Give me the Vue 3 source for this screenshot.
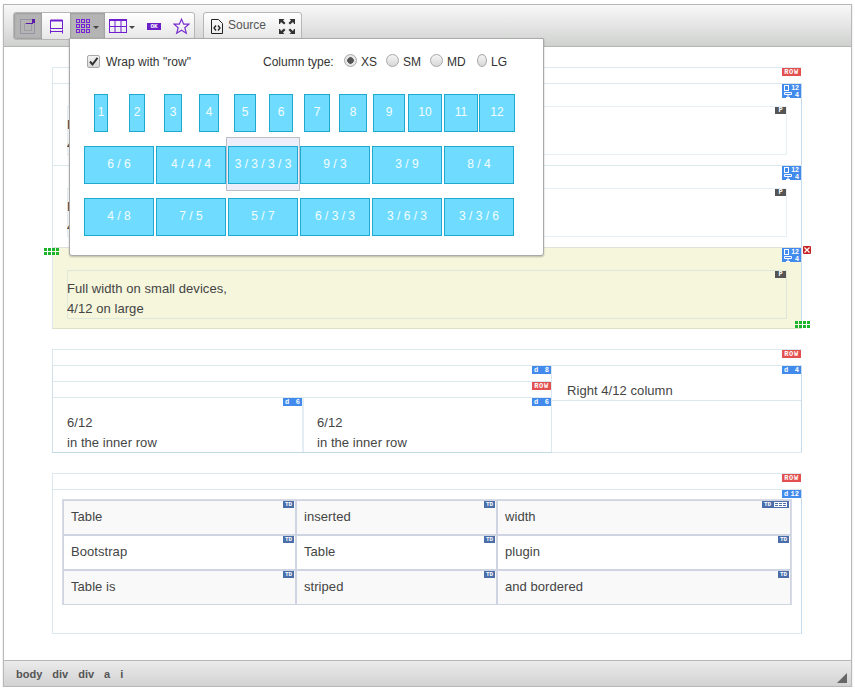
<script setup>
const singles = [
  { n: 1, w: 14, c: 35 }, { n: 2, w: 16, c: 35 }, { n: 3, w: 18, c: 35 }, { n: 4, w: 20, c: 35 },
  { n: 5, w: 22, c: 35 }, { n: 6, w: 24, c: 35 }, { n: 7, w: 26, c: 35 }, { n: 8, w: 28, c: 34 },
  { n: 9, w: 32, c: 35 }, { n: 10, w: 34, c: 36 }, { n: 11, w: 34, c: 35 }, { n: 12, w: 36, c: 36 }
]
const row2 = ['6 / 6', '4 / 4 / 4', '3 / 3 / 3 / 3', '9 / 3', '3 / 9', '8 / 4']
const row3 = ['4 / 8', '7 / 5', '5 / 7', '6 / 3 / 3', '3 / 6 / 3', '3 / 3 / 6']
const radios = [
  { label: 'XS', on: true, w: 42 }, { label: 'SM', on: false, w: 44 },
  { label: 'MD', on: false, w: 45 }, { label: 'LG', on: false, w: 30 }
]
const fullCols = [1, 2, 3]
const table = [
  ['Table', 'inserted', 'width'],
  ['Bootstrap', 'Table', 'plugin'],
  ['Table is', 'striped', 'and bordered']
]
const path = ['body', 'div', 'div', 'a', 'i']
</script>

<template>
  <div class="editor">
    <div class="toolbar">
      <div class="group">
        <button class="tb on w28">
          <svg width="18" height="18" viewBox="0 0 18 18"><rect x="1.500" y="2.500" width="14" height="14" fill="none" stroke="#7d7296" stroke-dasharray="1 1"/><rect x="5.500" y="6.500" width="7" height="7" fill="none" stroke="#8a8298" stroke-dasharray="1 1"/><path d="M7 6h6V2h3v4h-2v1H7z" fill="#5c1aa8"/></svg>
        </button>
        <button class="tb w28">
          <svg width="15" height="15" viewBox="0 0 15 15" fill="none" stroke="#6f1fd0"><rect x="1.500" y="1.500" width="12" height="8"/><path d="M1.500 1.500h12" stroke-width="2"/><path d="M1 12.500h13M1.500 10.500v4M13.500 10.500v4"/></svg>
        </button>
        <button class="tb on w35">
          <svg width="15" height="15" viewBox="0 0 15 15" fill="none" stroke="#7a22d8"><rect x="0.500" y="0.500" width="3" height="3"/><rect x="5.500" y="0.500" width="3" height="3"/><rect x="10.500" y="0.500" width="3" height="3"/><rect x="0.500" y="5.500" width="3" height="3"/><rect x="5.500" y="5.500" width="3" height="3"/><rect x="10.500" y="5.500" width="3" height="3"/><rect x="0.500" y="10.500" width="3" height="3"/><rect x="5.500" y="10.500" width="3" height="3"/><rect x="10.500" y="10.500" width="3" height="3"/></svg>
          <span class="caret"></span>
        </button>
        <button class="tb w34">
          <svg width="18" height="14" viewBox="0 0 18 14" fill="none" stroke="#6f1fd0"><rect x="0.500" y="0.500" width="17" height="13"/><path d="M0 1.500h18"/><path d="M0 7.500h18M6 0v14M12 0v14"/></svg>
          <span class="caret"></span>
        </button>
        <button class="tb w30">
          <span class="okicon">OK</span>
        </button>
        <button class="tb w25">
          <svg width="17" height="17" viewBox="0 0 17 17"><path d="M8.500 1.200l2.200 5h5.200l-4.100 3.500 1.500 5.600-4.800-3-4.800 3 1.500-5.600L1.100 6.200h5.200z" fill="none" stroke="#7a2fd0" stroke-width="1.200"/></svg>
        </button>
      </div>
      <div class="group source">
        <svg class="doc" width="12" height="15" viewBox="0 0 12 15" fill="none" stroke="#222"><path d="M.5.500h7l4 4v10H.500z"/><path d="M5 6.500L3 9l2 2.500M7 6.500L9 9l-2 2.500" stroke-width="1.300"/></svg>
        <span class="srclabel">Source</span>
        <svg class="fs" width="16" height="15" viewBox="0 0 16 15" fill="#333"><path d="M0 0h5.500L4 1.500 6.500 4 5 5.500 2 3 1 5H0zM16 0h-5.500L12 1.500 9.500 4 11 5.500 14 3l1 2h1zM0 15h5.500L4 13.500 6.500 11 5 9.500 2 12l-1-2H0zM16 15h-5.500l1.500-1.500L9.500 11l1.500-1.500 3 2.500 1-2h1z"/></svg>
      </div>
    </div>

    <div class="content">
      <section class="row first">
        <span class="badge rowb">ROW</span>
        <div v-for="i in fullCols" :key="i" class="col full" :class="{ hover: i === 3 }">
          <span class="badge colb">
            <span class="bl"><svg width="5" height="6" viewBox="0 0 5 6" fill="none" stroke="#fff"><rect x=".5" y=".5" width="4" height="5"/></svg><b>12</b></span>
            <span class="bl"><svg width="8" height="6" viewBox="0 0 8 6" fill="none" stroke="#fff"><path d="M.5.500h7v2h-7zM4 3v2M2 5.500h4"/></svg><b>4</b></span>
          </span>
          <div class="para">
            <span class="badge pb">P</span>
            Full width on small devices,<br>4/12 on large
          </div>
          <template v-if="i === 3">
            <svg class="grip gl" width="15" height="7" viewBox="0 0 15 7" fill="#1db32c"><path d="M0 0h3v3H0zM4 0h3v3H4zM8 0h3v3H8zM12 0h3v3h-3zM0 4h3v3H0zM4 4h3v3H4zM8 4h3v3H8zM12 4h3v3h-3z"/></svg>
            <svg class="grip gr" width="15" height="7" viewBox="0 0 15 7" fill="#1db32c"><path d="M0 0h3v3H0zM4 0h3v3H4zM8 0h3v3H8zM12 0h3v3h-3zM0 4h3v3H0zM4 4h3v3H4zM8 4h3v3H8zM12 4h3v3h-3z"/></svg>
            <svg class="close" width="8" height="8" viewBox="0 0 8 8"><rect width="8" height="8" rx="1" fill="#c62020"/><path d="M1.500 1.500l5 5M6.500 1.500l-5 5" stroke="#fff" stroke-width="1.200"/></svg>
          </template>
        </div>
      </section>

      <section class="row second">
        <span class="badge rowb">ROW</span>
        <div class="split">
          <div class="col eight">
            <span class="badge db">d<i>8</i></span>
            <div class="inner-row">
              <span class="badge rowb inner">ROW</span>
              <div class="inner-cols">
                <div class="col six">
                  <span class="badge db">d<i>6</i></span>
                  <p>6/12<br>in the inner row</p>
                </div>
                <div class="col six">
                  <span class="badge db">d<i>6</i></span>
                  <p>6/12<br>in the inner row</p>
                </div>
              </div>
            </div>
          </div>
          <div class="col four">
            <span class="badge db">d<i>4</i></span>
            <div class="rightp">Right 4/12 column</div>
          </div>
        </div>
      </section>

      <section class="row third">
        <span class="badge rowb">ROW</span>
        <div class="col twelve">
          <span class="badge db">d<i>12</i></span>
          <table class="tbl">
            <tbody>
              <tr v-for="(r, ri) in table" :key="ri" :class="{ striped: ri !== 1 }">
                <td v-for="(c, ci) in r" :key="ci" :class="'c' + ci">
                  <span class="badge tdb" :class="{ wide: ri === 0 && ci === 2 }">TD<svg v-if="ri === 0 && ci === 2" width="13" height="5" viewBox="0 0 13 5" fill="none" stroke="#fff"><rect x=".5" y=".5" width="12" height="4"/><path d="M4.500 0v5M8.500 0v5M0 2.500h13"/></svg></span>
                  {{ c }}
                </td>
              </tr>
            </tbody>
          </table>
        </div>
      </section>
    </div>

    <div class="statusbar">
      <span v-for="(p, i) in path" :key="i" class="crumb">{{ p }}</span>
      <svg class="resize" width="10" height="10" viewBox="0 0 10 10"><path d="M10 0v10H0z" fill="#666"/></svg>
    </div>

    <div class="popup">
      <div class="opts">
        <label class="wrap"><span class="check"><svg width="11" height="11" viewBox="0 0 11 11"><path d="M2 5.500l2.500 3L9.500 1.800" fill="none" stroke="#333" stroke-width="2"/></svg></span>Wrap with "row"</label>
        <div class="types">
          <span class="ctlabel">Column type:</span>
          <span v-for="r in radios" :key="r.label" class="radio" :style="{ width: r.w + 'px' }">
            <span class="dot" :class="{ sel: r.on }"></span>{{ r.label }}
          </span>
        </div>
      </div>
      <div class="singles">
        <span v-for="s in singles" :key="s.n" class="cell" :style="{ width: s.c + 'px' }">
          <span class="gbtn" :style="{ width: s.w + 'px' }">{{ s.n }}</span>
        </span>
      </div>
      <div class="combo r2">
        <span v-for="(t, i) in row2" :key="t" class="gwrap" :class="{ sel: i === 2 }"><span class="gbtn big">{{ t }}</span></span>
      </div>
      <div class="combo r3">
        <span v-for="t in row3" :key="t" class="gwrap"><span class="gbtn big">{{ t }}</span></span>
      </div>
    </div>
  </div>
</template>

<style scoped>
.editor {
  position: relative;
  box-sizing: border-box;
  width: 849px;
  height: 683px;
  margin: 4px 0 0 3px;
  border: 1px solid #b8b8b8;
  box-shadow: 0 1px 2px rgba(0, 0, 0, 0.15);
  display: flex;
  flex-direction: column;
  font-family: "Liberation Sans", Arial, sans-serif;
  background: #fff;
}
.toolbar {
  box-sizing: border-box;
  height: 42px;
  flex: none;
  display: flex;
  gap: 8px;
  padding: 7px 0 0 9px;
  background: linear-gradient(#f8f8f8, #cfd1cf);
  border-bottom: 1px solid #b4b4b4;
}
.group {
  box-sizing: border-box;
  height: 28px;
  display: flex;
  background: linear-gradient(#fff, #e6e6e6);
  border: 1px solid #b6b6b6;
  border-radius: 3px;
  overflow: hidden;
}
.tb {
  box-sizing: border-box;
  height: 26px;
  padding: 0;
  border: 0;
  background: transparent;
  display: flex;
  align-items: center;
  justify-content: center;
  gap: 2px;
}
.tb.on {
  background: #b4b4b4;
  box-shadow: inset 0 0 2px #777;
}
.w28 { width: 28px; }
.w35 { width: 35px; }
.w34 { width: 34px; }
.w30 { width: 30px; }
.w25 { width: 25px; }
.caret {
  width: 0;
  height: 0;
  border: 3px solid transparent;
  border-top-color: #444;
  border-bottom: 0;
  margin-top: 2px;
}
.okicon {
  display: block;
  width: 14px;
  height: 7px;
  background: #6a1fc8;
  color: #fff;
  font: bold 6px/7px "Liberation Mono", monospace;
  text-align: center;
}
.source {
  width: 99px;
  align-items: center;
  padding-left: 7px;
}
.doc { margin-right: 5px; }
.srclabel {
  font-size: 12px;
  color: #555;
  width: 51px;
  margin-top: -2px;
}
.content {
  flex: 1;
  padding: 20px 0 0 48px;
  overflow: hidden;
}
.row {
  box-sizing: border-box;
  position: relative;
  width: 750px;
  border-top: 1px solid #dbe9ef;
  padding-top: 15px;
  box-shadow: inset 1px 0 0 #dbe9ef;
}
.second, .third { margin-top: 20px; }
.col {
  box-sizing: border-box;
  position: relative;
  border: 1px solid #dbe9ef;
  border-bottom-width: 0;
  color: #444;
  font-size: 13px;
  letter-spacing: 0.06px;
}
.full {
  height: 82px;
  padding: 22px 14px 0;
  border-right-color: #c4dcee;
}
.full:last-child { border-bottom: 1px solid #dbe0c8; }
.hover {
  background: #f5f6dc;
  border-top-color: #dde3da;
}
.para {
  position: relative;
  box-sizing: border-box;
  height: 49px;
  padding-top: 8px;
  line-height: 20px;
  border: 1px solid rgba(150, 190, 210, 0.25);
  border-left: 0;
  box-shadow: inset 1px 0 0 rgba(150, 190, 210, 0.25);
}
.badge {
  position: absolute;
  display: block;
  color: #fff;
  font: bold 7px/8px "Liberation Mono", monospace;
  letter-spacing: 0;
  text-align: center;
  white-space: nowrap;
}
.rowb {
  top: 0;
  right: 1px;
  width: 19px;
  height: 8px;
  background: #e2514f;
  letter-spacing: 0.7px;
}
.rowb.inner { right: 0; }
.colb {
  top: 0;
  right: 0;
  width: 19px;
  height: 14px;
  background: #428bec;
}
.bl {
  display: flex;
  justify-content: space-between;
  align-items: center;
  height: 7px;
  padding: 0 2px;
}
.bl svg { flex: none; }
.bl b {
  font: bold 7px/7px "Liberation Sans", sans-serif;
}
.pb {
  top: 0;
  right: 0;
  width: 11px;
  height: 7px;
  line-height: 7px;
  background: #555;
}
.db {
  top: 0;
  right: 0;
  width: 19px;
  height: 8px;
  background: #428bec;
  display: flex;
  justify-content: space-between;
  padding: 0 2px;
  box-sizing: border-box;
}
.db i { font-style: normal; }
.grip { position: absolute; }
.gl { left: -9px; top: 0; }
.gr { right: -9px; bottom: 0; }
.close { position: absolute; right: -10px; top: -2px; }
.split { display: flex; height: 88px; }
.eight {
  width: 500px;
  padding-top: 15px;
  border-bottom: 1px solid #c0d8e4;
  border-left-color: #cfe0ea;
}
.four {
  width: 250px;
  border-left-width: 0;
  border-right-color: #c4dcee;
  border-bottom: 1px solid #dbe9ef;
}
.inner-row {
  position: relative;
  border-top: 1px solid #dbe9ef;
  padding-top: 15px;
}
.inner-cols { display: flex; }
.six {
  width: 249px;
  height: 55px;
  border-width: 1px 0 0 0;
}
.six + .six { border-left: 2px solid #e3edf3; }
.six p {
  margin: 0;
  padding: 15px 14px 0;
  line-height: 20px;
}
.six + .six p { padding-left: 13px; }
.rightp {
  box-sizing: border-box;
  height: 35px;
  padding: 15px 15px 0;
  line-height: 20px;
  border-bottom: 1px solid #dbe9ef;
}
.twelve {
  height: 145px;
  padding: 9px 9px 0;
  border-bottom: 1px solid #dbe9ef;
  border-right-color: #c4dcee;
}
.tbl {
  width: 730px;
  table-layout: fixed;
  border-collapse: separate;
  border-spacing: 0;
  border: 1px solid #d8dbe4;
  border-bottom-width: 0;
  font-size: 13px;
  color: #444;
}
td {
  position: relative;
  box-sizing: border-box;
  height: 35px;
  padding: 0 7px 2px;
  border: 1px solid #cfd4e2;
}
.c0 { width: 233px; }
.c1 { width: 201px; }
.striped td { background: #f9f9f9; }
.tdb {
  top: 0;
  right: 1px;
  width: 11px;
  height: 7px;
  line-height: 7px;
  background: #4a6ea9;
  font-size: 6px;
  display: flex;
  justify-content: center;
  align-items: center;
  gap: 3px;
}
.tdb.wide { width: 27px; }
.statusbar {
  position: relative;
  box-sizing: border-box;
  height: 26px;
  flex: none;
  padding-left: 12px;
  display: flex;
  align-items: center;
  background: linear-gradient(#ebebeb, #d2d2d2);
  border-top: 1px solid #b8b8b8;
}
.crumb {
  font-size: 11px;
  font-weight: bold;
  color: #555;
  margin-right: 10px;
}
.resize { position: absolute; right: 4px; bottom: 3px; }
.popup {
  position: absolute;
  left: 65px;
  top: 33px;
  box-sizing: border-box;
  width: 475px;
  height: 218px;
  background: #fff;
  border: 1px solid #aaa;
  border-radius: 0 0 3px 3px;
  box-shadow: 0 1px 2px rgba(0, 0, 0, 0.25);
  padding: 0 0 0 14px;
}
.opts {
  display: flex;
  height: 55px;
  padding: 15px 0 0 3px;
  box-sizing: border-box;
  font-size: 12px;
  color: #333;
}
.wrap {
  display: flex;
  align-items: center;
  height: 16px;
  width: 176px;
  letter-spacing: 0.05px;
}
.check {
  box-sizing: border-box;
  width: 13px;
  height: 13px;
  margin: -2px 6px 0 0;
  border: 1px solid #a8a8a8;
  border-radius: 2px;
  background: linear-gradient(#f4f4f4, #d8d8d8);
  display: flex;
  align-items: center;
  justify-content: center;
}
.types { display: flex; align-items: center; height: 16px; }
.ctlabel { width: 81px; }
.radio { display: flex; align-items: center; }
.radio:nth-child(4) { margin-right: 2px; }
.dot {
  box-sizing: border-box;
  width: 13px;
  height: 13px;
  margin: -4px 4px 0 0;
  border: 1px solid #a8a8a8;
  border-radius: 50%;
  background: linear-gradient(#f4f4f4, #d8d8d8);
}
.dot.sel { background: radial-gradient(circle, #555 0 3px, #e6e6e6 3.500px); }
.singles {
  display: flex;
  height: 52px;
  padding-left: 10px;
}
.cell { display: block; flex: none; }
.gbtn {
  display: flex;
  align-items: center;
  justify-content: center;
  box-sizing: border-box;
  height: 38px;
  padding-bottom: 2px;
  background: #6fdcff;
  border: 1px solid #1fa9d0;
  color: #f4fcff;
  font-size: 12px;
}
.gbtn.big { width: 70px; }
.combo { display: flex; height: 52px; }
.gwrap {
  box-sizing: border-box;
  width: 72px;
  height: 38px;
  flex: none;
  position: relative;
}
.gwrap.sel::before {
  content: "";
  position: absolute;
  left: -2px;
  top: -9px;
  width: 74px;
  height: 54px;
  box-sizing: border-box;
  background: #eeeefb;
  border: 1px solid #bdbdc8;
}
.gwrap .gbtn { position: relative; }
</style>
